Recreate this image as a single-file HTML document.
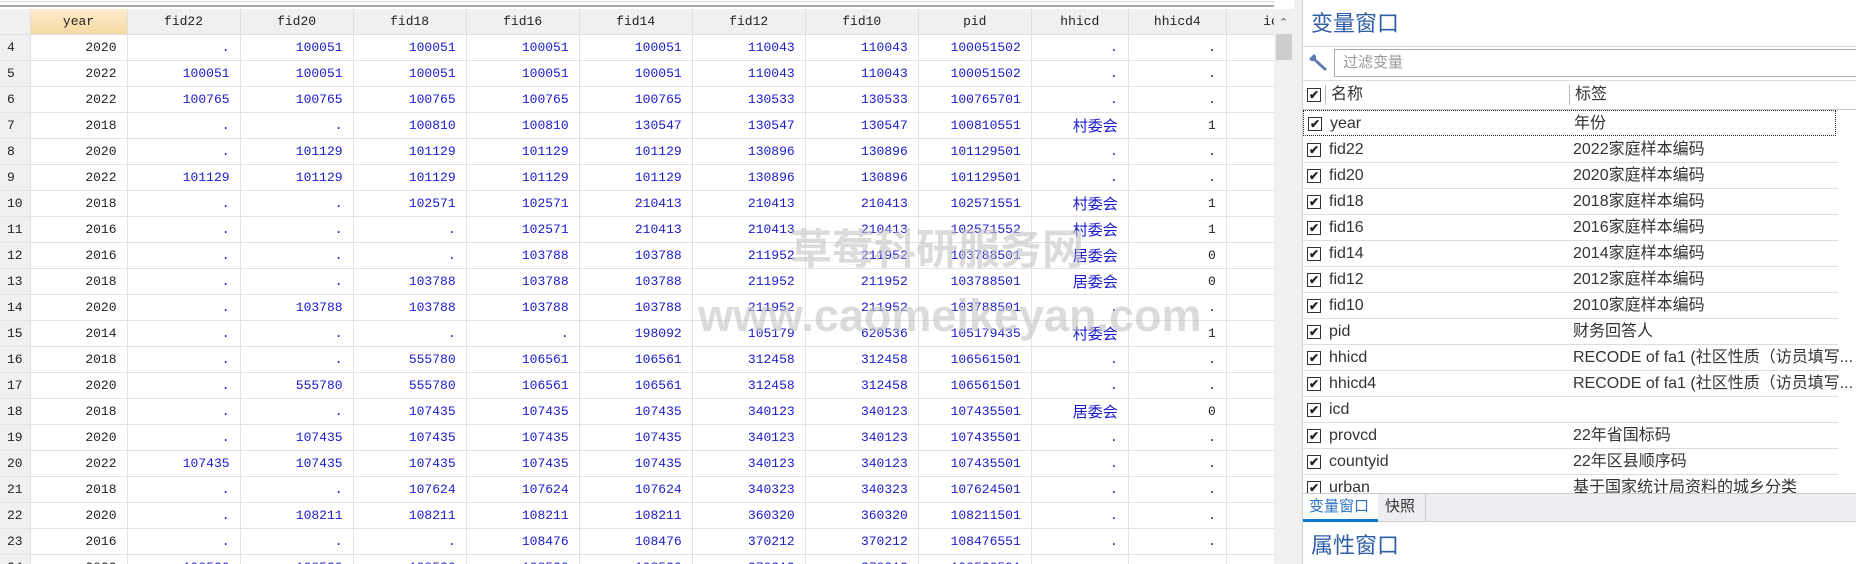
<!DOCTYPE html>
<html><head><meta charset="utf-8"><style>
*{margin:0;padding:0;box-sizing:border-box}
body{width:1856px;height:564px;overflow:hidden;background:#fff;position:relative;font-family:"Liberation Sans","Noto Sans CJK SC",sans-serif}
.top1{position:absolute;left:0;top:1px;width:1294px;height:1px;background:#d8d8d8}
.top2{position:absolute;left:0;top:5px;width:1294px;height:2px;background:#a8a8a8}
table{position:absolute;left:0;top:9px;border-collapse:collapse;table-layout:fixed;width:1324px;font-family:"Liberation Mono",monospace;font-size:13px}
.clip{position:absolute;left:0;top:0;width:1274px;height:564px;overflow:hidden}
td,th{border-right:1px solid #e2e2e2;border-bottom:1px solid #e2e2e2;height:26px;text-align:right;padding-right:10px;color:#1a1acc;white-space:nowrap;overflow:hidden}
th{height:25px;background:#f0f0f0;font-weight:normal;color:#222;text-align:center;padding:0;border-color:#dedede}
th.y{background:linear-gradient(#fdeccd,#f7d9a3)}
td.n{background:#f0f0f0;color:#222;text-align:left;padding-left:7px;padding-right:0}
td.k{color:#222}
td.c{font-family:"Liberation Sans","Noto Sans CJK SC",sans-serif;font-size:15px}
.sb{position:absolute;left:1274px;top:9px;width:20px;height:555px;background:#f0f0f0}
.sb .up{position:absolute;top:7px;left:5px;font-size:11px;color:#555}
.sb .th{position:absolute;top:25px;left:2px;width:16px;height:26px;background:#cdcdcd}
.gap{position:absolute;left:1294px;top:0;width:9px;height:564px;background:#f0f0f0;border-right:1px solid #d0d0d0}
.rp{position:absolute;left:1303px;top:0;width:553px;height:564px;background:#fff}
.title{position:absolute;left:8px;top:10px;font-size:22px;line-height:28px;color:#2f5ea8}
.sep{position:absolute;left:0;top:46px;width:553px;height:1px;background:#d8d8d8}
.filter{position:absolute;left:31px;top:49px;width:530px;height:28px;border:1px solid #aaa;font-size:15px;line-height:18px;color:#9a9a9a;padding:4px 8px}
.hdr{position:absolute;left:0;top:80px;width:553px;height:30px;border-top:1px solid #ddd;border-bottom:1px solid #c8c8c8;font-size:16px;line-height:20px;color:#333}
.cb{position:absolute;width:14px;height:14px;border:1px solid #333;background:#fff;font-size:12px;line-height:12px;text-align:center;color:#222;font-weight:bold}
.row{position:absolute;left:0;width:535px;height:26px;border-bottom:1px solid #ddd;font-size:16px;line-height:20px;color:#333}
.row .cb{left:4px;top:6px}
.row .nm{position:absolute;left:26px;top:3px}
.row .lb{position:absolute;left:270px;top:3px;white-space:nowrap}
.tabs{position:absolute;left:0;top:493px;width:553px;height:29px;background:#eeeef2;border-top:1px solid #ccc;border-bottom:1px solid #ccc}
.wm{position:absolute;color:rgba(195,195,195,0.6);font-weight:bold;white-space:nowrap}
</style></head><body>
<div class="clip">
<div class="top1"></div><div class="top2"></div>
<table>
<colgroup><col style="width:30px"><col style="width:97px"><col style="width:113px"><col style="width:113px"><col style="width:113px"><col style="width:113px"><col style="width:113px"><col style="width:113px"><col style="width:113px"><col style="width:113px"><col style="width:97px"><col style="width:98px"><col style="width:97px"></colgroup>
<tr><th></th><th class="y">year</th><th>fid22</th><th>fid20</th><th>fid18</th><th>fid16</th><th>fid14</th><th>fid12</th><th>fid10</th><th>pid</th><th>hhicd</th><th>hhicd4</th><th>icd</th></tr>
<tr><td class="n">4</td><td class="k">2020</td><td>.</td><td>100051</td><td>100051</td><td>100051</td><td>100051</td><td>110043</td><td>110043</td><td>100051502</td><td>.</td><td class="k">.</td><td></td></tr>
<tr><td class="n">5</td><td class="k">2022</td><td>100051</td><td>100051</td><td>100051</td><td>100051</td><td>100051</td><td>110043</td><td>110043</td><td>100051502</td><td>.</td><td class="k">.</td><td></td></tr>
<tr><td class="n">6</td><td class="k">2022</td><td>100765</td><td>100765</td><td>100765</td><td>100765</td><td>100765</td><td>130533</td><td>130533</td><td>100765701</td><td>.</td><td class="k">.</td><td></td></tr>
<tr><td class="n">7</td><td class="k">2018</td><td>.</td><td>.</td><td>100810</td><td>100810</td><td>130547</td><td>130547</td><td>130547</td><td>100810551</td><td class="c">村委会</td><td class="k">1</td><td></td></tr>
<tr><td class="n">8</td><td class="k">2020</td><td>.</td><td>101129</td><td>101129</td><td>101129</td><td>101129</td><td>130896</td><td>130896</td><td>101129501</td><td>.</td><td class="k">.</td><td></td></tr>
<tr><td class="n">9</td><td class="k">2022</td><td>101129</td><td>101129</td><td>101129</td><td>101129</td><td>101129</td><td>130896</td><td>130896</td><td>101129501</td><td>.</td><td class="k">.</td><td></td></tr>
<tr><td class="n">10</td><td class="k">2018</td><td>.</td><td>.</td><td>102571</td><td>102571</td><td>210413</td><td>210413</td><td>210413</td><td>102571551</td><td class="c">村委会</td><td class="k">1</td><td></td></tr>
<tr><td class="n">11</td><td class="k">2016</td><td>.</td><td>.</td><td>.</td><td>102571</td><td>210413</td><td>210413</td><td>210413</td><td>102571552</td><td class="c">村委会</td><td class="k">1</td><td></td></tr>
<tr><td class="n">12</td><td class="k">2016</td><td>.</td><td>.</td><td>.</td><td>103788</td><td>103788</td><td>211952</td><td>211952</td><td>103788501</td><td class="c">居委会</td><td class="k">0</td><td></td></tr>
<tr><td class="n">13</td><td class="k">2018</td><td>.</td><td>.</td><td>103788</td><td>103788</td><td>103788</td><td>211952</td><td>211952</td><td>103788501</td><td class="c">居委会</td><td class="k">0</td><td></td></tr>
<tr><td class="n">14</td><td class="k">2020</td><td>.</td><td>103788</td><td>103788</td><td>103788</td><td>103788</td><td>211952</td><td>211952</td><td>103788501</td><td>.</td><td class="k">.</td><td></td></tr>
<tr><td class="n">15</td><td class="k">2014</td><td>.</td><td>.</td><td>.</td><td>.</td><td>198092</td><td>105179</td><td>620536</td><td>105179435</td><td class="c">村委会</td><td class="k">1</td><td></td></tr>
<tr><td class="n">16</td><td class="k">2018</td><td>.</td><td>.</td><td>555780</td><td>106561</td><td>106561</td><td>312458</td><td>312458</td><td>106561501</td><td>.</td><td class="k">.</td><td></td></tr>
<tr><td class="n">17</td><td class="k">2020</td><td>.</td><td>555780</td><td>555780</td><td>106561</td><td>106561</td><td>312458</td><td>312458</td><td>106561501</td><td>.</td><td class="k">.</td><td></td></tr>
<tr><td class="n">18</td><td class="k">2018</td><td>.</td><td>.</td><td>107435</td><td>107435</td><td>107435</td><td>340123</td><td>340123</td><td>107435501</td><td class="c">居委会</td><td class="k">0</td><td></td></tr>
<tr><td class="n">19</td><td class="k">2020</td><td>.</td><td>107435</td><td>107435</td><td>107435</td><td>107435</td><td>340123</td><td>340123</td><td>107435501</td><td>.</td><td class="k">.</td><td></td></tr>
<tr><td class="n">20</td><td class="k">2022</td><td>107435</td><td>107435</td><td>107435</td><td>107435</td><td>107435</td><td>340123</td><td>340123</td><td>107435501</td><td>.</td><td class="k">.</td><td></td></tr>
<tr><td class="n">21</td><td class="k">2018</td><td>.</td><td>.</td><td>107624</td><td>107624</td><td>107624</td><td>340323</td><td>340323</td><td>107624501</td><td>.</td><td class="k">.</td><td></td></tr>
<tr><td class="n">22</td><td class="k">2020</td><td>.</td><td>108211</td><td>108211</td><td>108211</td><td>108211</td><td>360320</td><td>360320</td><td>108211501</td><td>.</td><td class="k">.</td><td></td></tr>
<tr><td class="n">23</td><td class="k">2016</td><td>.</td><td>.</td><td>.</td><td>108476</td><td>108476</td><td>370212</td><td>370212</td><td>108476551</td><td>.</td><td class="k">.</td><td></td></tr>
<tr><td class="n">24</td><td class="k">2022</td><td>108530</td><td>108530</td><td>108530</td><td>108530</td><td>108530</td><td>370212</td><td>370212</td><td>108530501</td><td>.</td><td class="k">.</td><td></td></tr>
</table>
<div class="wm" style="left:790px;top:222px;font-size:42px;line-height:50px;font-family:'Noto Sans CJK SC',sans-serif">草莓科研服务网</div>
<div class="wm" style="left:698px;top:290px;font-size:45px;line-height:52px;font-family:'Liberation Sans',sans-serif">www.caomeikeyan.com</div>
</div>
<div class="sb"><div class="up">&#8963;</div><div class="th"></div></div>
<div class="gap"></div>
<div class="rp">
<div class="title">变量窗口</div>
<div class="sep"></div>
<svg style="position:absolute;left:5px;top:53px" width="22" height="20" viewBox="0 0 22 20"><path d="M3 4 L6 1 L8 3 L8 6 L19 16 L17 18 L6 8 L3 8 L1 6 Z" fill="#5a7bab"/></svg>
<div class="filter">过滤变量</div>
<div class="hdr"><div class="cb" style="left:4px;top:7px">✔</div><div style="position:absolute;left:22px;top:4px;width:1px;height:20px;background:#bbb"></div><span style="position:absolute;left:28px;top:4px">名称</span><div style="position:absolute;left:266px;top:4px;width:1px;height:20px;background:#bbb"></div><span style="position:absolute;left:272px;top:4px">标签</span></div>
<div class="row" style="top:110px;border:1px dotted #222;width:533px"><div class="cb">✔</div><span class="nm">year</span><span class="lb">年份</span></div>
<div class="row" style="top:137px"><div class="cb">✔</div><span class="nm">fid22</span><span class="lb">2022家庭样本编码</span></div>
<div class="row" style="top:163px"><div class="cb">✔</div><span class="nm">fid20</span><span class="lb">2020家庭样本编码</span></div>
<div class="row" style="top:189px"><div class="cb">✔</div><span class="nm">fid18</span><span class="lb">2018家庭样本编码</span></div>
<div class="row" style="top:215px"><div class="cb">✔</div><span class="nm">fid16</span><span class="lb">2016家庭样本编码</span></div>
<div class="row" style="top:241px"><div class="cb">✔</div><span class="nm">fid14</span><span class="lb">2014家庭样本编码</span></div>
<div class="row" style="top:267px"><div class="cb">✔</div><span class="nm">fid12</span><span class="lb">2012家庭样本编码</span></div>
<div class="row" style="top:293px"><div class="cb">✔</div><span class="nm">fid10</span><span class="lb">2010家庭样本编码</span></div>
<div class="row" style="top:319px"><div class="cb">✔</div><span class="nm">pid</span><span class="lb">财务回答人</span></div>
<div class="row" style="top:345px"><div class="cb">✔</div><span class="nm">hhicd</span><span class="lb">RECODE of fa1 (社区性质（访员填写...</span></div>
<div class="row" style="top:371px"><div class="cb">✔</div><span class="nm">hhicd4</span><span class="lb">RECODE of fa1 (社区性质（访员填写...</span></div>
<div class="row" style="top:397px"><div class="cb">✔</div><span class="nm">icd</span><span class="lb"></span></div>
<div class="row" style="top:423px"><div class="cb">✔</div><span class="nm">provcd</span><span class="lb">22年省国标码</span></div>
<div class="row" style="top:449px"><div class="cb">✔</div><span class="nm">countyid</span><span class="lb">22年区县顺序码</span></div>
<div class="row" style="top:475px;border:none"><div class="cb">✔</div><span class="nm">urban</span><span class="lb">基于国家统计局资料的城乡分类</span></div>
<div class="tabs">
<div style="position:absolute;left:0;top:0;width:75px;height:28px;background:#fff;border-bottom:3px solid #0a78d2;color:#2a6fc0;font-size:15px;line-height:20px;padding:3px 0 0 6px">变量窗口</div>
<div style="position:absolute;left:75px;top:0;width:48px;height:27px;border-right:1px solid #ccc;color:#333;font-size:15px;line-height:20px;padding:3px 0 0 7px">快照</div>
</div>
<div class="title" style="top:532px">属性窗口</div>
</div>
</body></html>
